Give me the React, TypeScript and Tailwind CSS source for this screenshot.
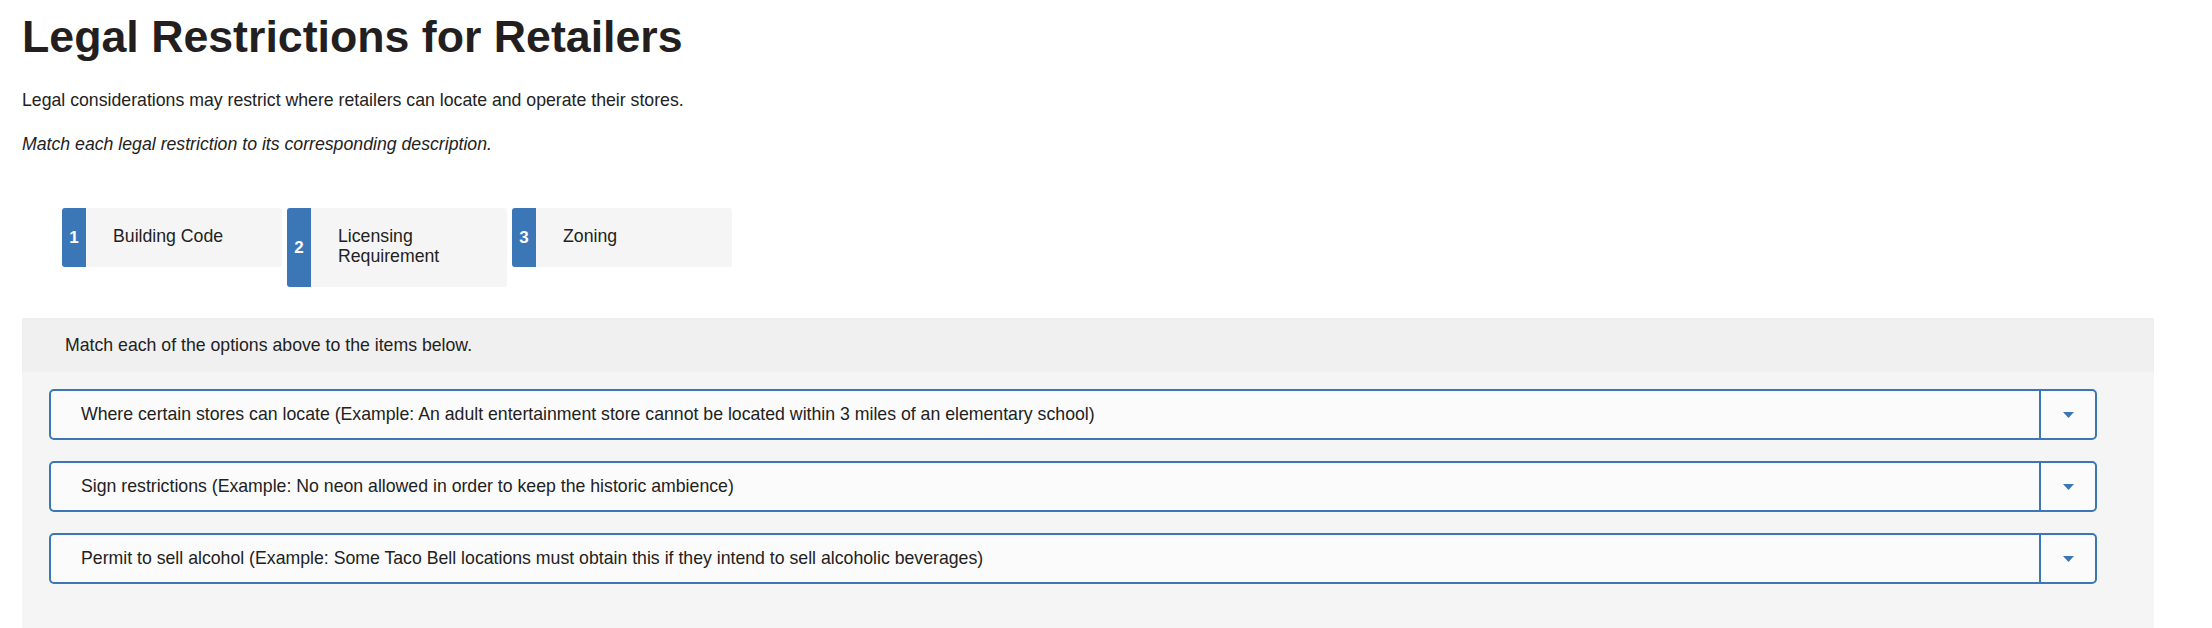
import React from 'react';

const options = [
    { n: 1, label: ['Building Code'] },
    { n: 2, label: ['Licensing', 'Requirement'] },
    { n: 3, label: ['Zoning'] },
];

const items = [
    'Where certain stores can locate (Example: An adult entertainment store cannot be located within 3 miles of an elementary school)',
    'Sign restrictions (Example: No neon allowed in order to keep the historic ambience)',
    'Permit to sell alcohol (Example: Some Taco Bell locations must obtain this if they intend to sell alcoholic beverages)',
];

function OptionCard({ n, label }: { n: number; label: string[] }) {
    return (
        <div className="flex w-[220px] items-stretch rounded-[3px] bg-[#f5f5f5]">
            <div className="flex w-[24px] shrink-0 items-center justify-center rounded-l-[3px] bg-[#3b77b7] text-[17px] font-bold text-white">
                {n}
            </div>
            <div className="pl-[27px] pr-[20px] pt-[18px] pb-[21px] text-[17.7px] leading-[20px] text-[#222]">
                {label.map((l, i) => (
                    <div key={i}>{l}</div>
                ))}
            </div>
        </div>
    );
}

function MatchRow({ text }: { text: string }) {
    return (
        <div className="flex h-[51px] items-stretch rounded-[5px] border-2 border-[#3b77b7] bg-[#fbfbfb]">
            <div className="flex flex-1 items-center pl-[30px] text-[17.7px] text-[#222]">{text}</div>
            <div className="flex w-[56px] shrink-0 items-center justify-center border-l-2 border-[#3b77b7]">
                <svg width="11" height="6" viewBox="0 0 11 6">
                    <path d="M0 0 L11 0 L5.5 6 Z" fill="#3b77b7" />
                </svg>
            </div>
        </div>
    );
}

export default function App() {
    return (
        <div className="min-h-screen bg-white pl-[22px] pr-[58px] pt-[15px] font-['Liberation_Sans',Arial,sans-serif] text-[#222]">
            <h1 className="text-[44.7px] font-bold leading-[44px] text-[#231f20]">Legal Restrictions for Retailers</h1>
            <p className="mt-[29px] text-[17.7px] leading-[24px]">
                Legal considerations may restrict where retailers can locate and operate their stores.
            </p>
            <p className="mt-[20px] text-[17.7px] italic leading-[24px]">
                Match each legal restriction to its corresponding description.
            </p>

            <div className="ml-[40px] mt-[52px] flex items-start gap-[5px]">
                {options.map((o) => (
                    <OptionCard key={o.n} n={o.n} label={o.label} />
                ))}
            </div>

            <div className="mt-[31px] rounded-t-[2px] bg-[#f5f5f5] pb-[48px]">
                <div className="flex h-[54px] items-center bg-[#f0f0f0] pl-[43px] text-[17.7px]">
                    Match each of the options above to the items below.
                </div>
                <div className="flex flex-col gap-[21px] pl-[27px] pr-[57px] pt-[17px]">
                    {items.map((t) => (
                        <MatchRow key={t} text={t} />
                    ))}
                </div>
            </div>
        </div>
    );
}
